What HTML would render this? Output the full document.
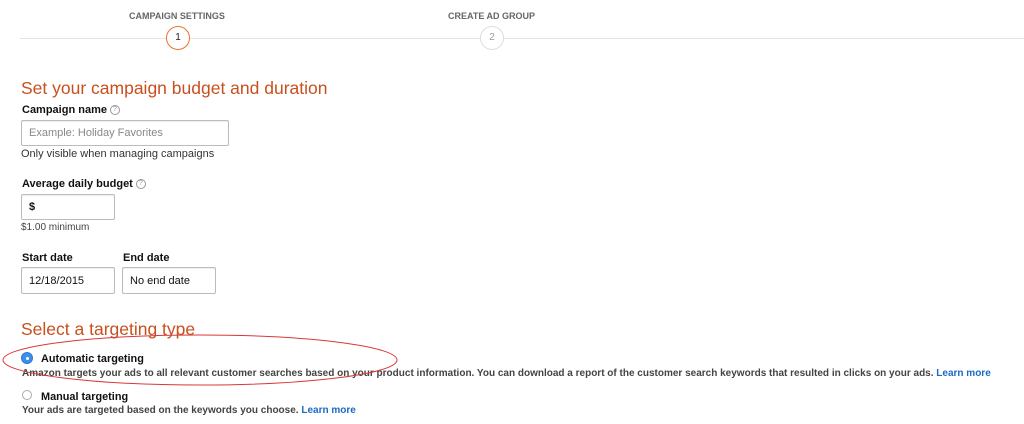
<!DOCTYPE html>
<html><head><meta charset="utf-8"><style>
body{margin:0;width:1024px;height:424px;background:#fff;font-family:"Liberation Sans",Arial,sans-serif;position:relative;overflow:hidden;color:#111}
.a{position:absolute;white-space:nowrap}
.step{font-size:9px;font-weight:bold;color:#666}
.circ{position:absolute;width:22px;height:22px;border-radius:50%;background:#fff;font-size:10px;text-align:center;line-height:22px}
h2{position:absolute;margin:0;font-weight:normal;font-size:17.5px;color:#c8501e;white-space:nowrap}
.lbl{font-size:11px;font-weight:bold}
.q{display:inline-block;width:8px;height:8px;border:1px solid #999;border-radius:50%;font-size:7px;line-height:8px;text-align:center;color:#999;vertical-align:middle;margin-left:3px;font-weight:normal}
.inp{position:absolute;border:1px solid #bbb;border-radius:2px;box-sizing:border-box;font-size:11px;padding-left:7px;display:flex;align-items:center;box-shadow:inset 0 1px 1px #eee}
.sm{font-size:11px;color:#333}
.bt{font-size:10px;color:#444;font-weight:bold}
.lm{color:#1a6ac6}
</style></head><body>
<div class="a" style="left:20px;top:38px;width:1004px;height:1px;background:#e4e4e4"></div>
<div class="a step" style="left:129px;top:11px">CAMPAIGN SETTINGS</div>
<div class="a step" style="left:448px;top:11px">CREATE AD GROUP</div>
<div class="circ" style="left:166px;top:26px;border:1.5px solid #e8742d;color:#222">1</div>
<div class="circ" style="left:480px;top:26px;border:1.5px solid #ddd;color:#999">2</div>

<h2 style="left:21px;top:78px">Set your campaign budget and duration</h2>
<div class="a lbl" style="left:22px;top:104px">Campaign name<span class="q">?</span></div>
<div class="inp" style="left:21px;top:120px;width:208px;height:26px;color:#888">Example: Holiday Favorites</div>
<div class="a sm" style="left:21px;top:148px">Only visible when managing campaigns</div>

<div class="a lbl" style="left:22px;top:178px">Average daily budget<span class="q">?</span></div>
<div class="inp" style="left:21px;top:194px;width:94px;height:26px;font-weight:bold">$</div>
<div class="a" style="left:21px;top:222px;font-size:10px;color:#444">$1.00 minimum</div>

<div class="a lbl" style="left:22px;top:252px">Start date</div>
<div class="a lbl" style="left:123px;top:252px">End date</div>
<div class="inp" style="left:21px;top:267px;width:94px;height:27px">12/18/2015</div>
<div class="inp" style="left:122px;top:267px;width:94px;height:27px">No end date</div>

<h2 style="left:21px;top:319px">Select a targeting type</h2>
<div class="a" style="left:22px;top:353px;width:10px;height:10px;border-radius:50%;background:#3d8fe8;box-shadow:0 0 0 1px #2c7bd6"><div style="position:absolute;left:3.5px;top:3.5px;width:3px;height:3px;border-radius:50%;background:#fff"></div></div>
<div class="a" style="left:41px;top:353px;font-size:10.9px;font-weight:bold">Automatic targeting</div>
<div class="a bt" style="left:22px;top:368px">Amazon targets your ads to all relevant customer searches based on your product information. You can download a report of the customer search keywords that resulted in clicks on your ads. <span class="lm">Learn more</span></div>
<div class="a" style="left:22px;top:390px;width:10px;height:10px;border-radius:50%;border:1px solid #aaa;box-sizing:border-box"></div>
<div class="a" style="left:41px;top:391px;font-size:10.9px;font-weight:bold">Manual targeting</div>
<div class="a bt" style="left:22px;top:405px">Your ads are targeted based on the keywords you choose. <span class="lm">Learn more</span></div>

<svg class="a" style="left:0;top:0" width="1024" height="424"><ellipse cx="200" cy="360" rx="197" ry="25" fill="none" stroke="#d9383a" stroke-width="1"/></svg>
</body></html>
